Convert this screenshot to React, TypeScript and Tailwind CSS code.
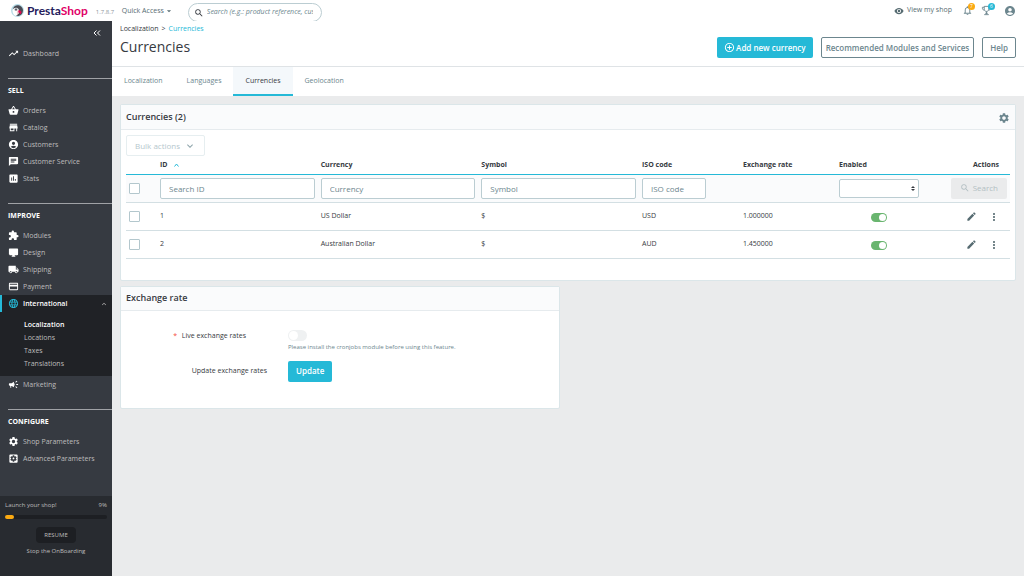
import type { ComponentType, ReactNode } from "react";
import {
  MdAccountCircle,
  MdAddCircleOutline,
  MdArrowDropDown,
  MdAssessment,
  MdCampaign,
  MdChat,
  MdCreditCard,
  MdDesktopMac,
  MdEdit,
  MdExpandLess,
  MdExpandMore,
  MdExtension,
  MdLanguage,
  MdLocalShipping,
  MdMoreVert,
  MdNotificationsNone,
  MdSearch,
  MdSettings,
  MdSettingsApplications,
  MdShoppingBasket,
  MdStore,
  MdTrendingUp,
  MdVisibility,
} from "react-icons/md";

type Icon = ComponentType<{ className?: string }>;
type Item = { label: string; icon: Icon };

const sell: Item[] = [
  { label: "Orders", icon: MdShoppingBasket },
  { label: "Catalog", icon: MdStore },
  { label: "Customers", icon: MdAccountCircle },
  { label: "Customer Service", icon: MdChat },
  { label: "Stats", icon: MdAssessment },
];

const improve: Item[] = [
  { label: "Modules", icon: MdExtension },
  { label: "Design", icon: MdDesktopMac },
  { label: "Shipping", icon: MdLocalShipping },
  { label: "Payment", icon: MdCreditCard },
];

const configure: Item[] = [
  { label: "Shop Parameters", icon: MdSettings },
  { label: "Advanced Parameters", icon: MdSettingsApplications },
];

const currencies = [
  { id: 1, name: "US Dollar", symbol: "$", iso: "USD", rate: "1.000000" },
  { id: 2, name: "Australian Dollar", symbol: "$", iso: "AUD", rate: "1.450000" },
];

function LogoMark() {
  return (
    <svg viewBox="0 0 26 26" className="size-[13px]" aria-hidden="true">
      <circle cx="13" cy="13" r="13" fill="#b7dbe6" />
      <path d="M4 10C5 4 11 1 17 3c5 2 7 6 7 10 0 6-4 10-9 11l-6-1c2-4 1-7-2-9z" fill="#4a4c55" />
      <path d="M3 13c1-4 5-6 9-5 3 1 4 3 4 6-1 5-3 9-7 10-4-2-6-6-6-11z" fill="#fff" />
      <circle cx="10" cy="11" r="3" fill="#a3a8b0" />
      <circle cx="10" cy="11" r="1.3" fill="#2b2b33" />
      <path d="M14 13c4-2 7 1 7 4l-2 4c-1-3-3-4-5-4z" fill="#df0a50" />
      <path d="M14 12c-3 2-3 6-1 9l3-2c-1-1-2-3-1-7z" fill="#f3c9cf" />
    </svg>
  );
}

function Trophy() {
  return (
    <svg viewBox="0 0 24 24" className="size-[11px]" fill="none" stroke="currentColor" strokeWidth="2" aria-hidden="true">
      <path d="M7 3h10v6c0 3-2 5-5 5s-5-2-5-5zM7 5H3v2c0 3 2 4 4 4M17 5h4v2c0 3-2 4-4 4M12 14v6M7 21h10M9 18h6" />
    </svg>
  );
}

function NavLink({ item }: { item: Item }) {
  const Glyph = item.icon;
  return (
    <li>
      <a href="#" className="flex h-[17px] items-center gap-1 pl-2 text-[#bebdbd]">
        <Glyph className="size-[11px] shrink-0 text-white" />
        {item.label}
      </a>
    </li>
  );
}

function NavGroup({ title, children }: { title: string; children: ReactNode }) {
  return (
    <section>
      <h2 className="ml-2 flex h-6 items-center border-t border-[#a0a2a6] text-[7px] font-bold text-white">{title}</h2>
      {children}
    </section>
  );
}

function Sidebar() {
  return (
    <aside className="flex w-28 shrink-0 flex-col bg-[#363a41] text-[7px] leading-[10px]">
      <div className="flex h-6 items-center justify-end pr-[11px]">
        <button aria-label="Collapse menu" className="text-white">
          <svg viewBox="0 0 16 12" className="h-[6px] w-2" fill="none" stroke="currentColor" strokeWidth="2" aria-hidden="true">
            <path d="M7 1 2 6l5 5M14 1 9 6l5 5" />
          </svg>
        </button>
      </div>
      <nav aria-label="Main menu">
        <ul className="mb-4">
          <NavLink item={{ label: "Dashboard", icon: MdTrendingUp }} />
        </ul>
        <NavGroup title="SELL">
          <ul className="mb-4">
            {sell.map((i) => (
              <NavLink key={i.label} item={i} />
            ))}
          </ul>
        </NavGroup>
        <NavGroup title="IMPROVE">
          <ul className="mb-4">
            {improve.map((i) => (
              <NavLink key={i.label} item={i} />
            ))}
            <li className="bg-[#202226]">
              <a href="#" className="flex h-[17px] items-center gap-1 border-l-2 border-[#25b9d7] pr-1 pl-[6px] font-semibold text-white">
                <MdLanguage className="size-[11px] shrink-0 text-[#25b9d7]" />
                <span className="grow">International</span>
                <MdExpandLess className="size-2 text-[#bebdbd]" />
              </a>
              <ul className="pt-[6px] pb-[6px] pl-6 text-[#bebdbd]">
                <li><a href="#" className="flex h-[13px] items-center font-semibold text-white">Localization</a></li>
                <li><a href="#" className="flex h-[13px] items-center">Locations</a></li>
                <li><a href="#" className="flex h-[13px] items-center">Taxes</a></li>
                <li><a href="#" className="flex h-[13px] items-center">Translations</a></li>
              </ul>
            </li>
            <NavLink item={{ label: "Marketing", icon: MdCampaign }} />
          </ul>
        </NavGroup>
        <NavGroup title="CONFIGURE">
          <ul>
            {configure.map((i) => (
              <NavLink key={i.label} item={i} />
            ))}
          </ul>
        </NavGroup>
      </nav>
      <div className="mt-auto flex h-20 flex-col items-center bg-[#282b30] px-[5px] pt-1 text-[6px] text-[#bebdbd]">
        <div className="flex w-full justify-between">
          <span>Launch your shop!</span>
          <span>9%</span>
        </div>
        <div className="mt-[5px] h-1 w-full rounded-full bg-[#1d1f23]">
          <div className="h-1 w-[9%] rounded-full bg-[#fbaa12]" />
        </div>
        <button className="mt-2 h-4 rounded-sm bg-[#1d1f23] px-2">RESUME</button>
        <a href="#" className="mt-[3px]">Stop the OnBoarding</a>
      </div>
    </aside>
  );
}

function TopBar() {
  return (
    <header className="flex h-[21px] items-center bg-white text-[#6c868e]">
      <a href="#" className="flex items-center gap-[3px] pl-[11px] font-['Lato',sans-serif] text-[12px] leading-4 font-bold text-[#251b5b]">
        <LogoMark />
        <span>Presta<span className="text-[#df0067]">Shop</span></span>
      </a>
      <span className="w-7 shrink-0 pt-1 pl-2 text-[6px] text-[#8d959c]">1.7.8.7</span>
      <button className="flex shrink-0 items-center pt-px pl-[6px] text-[#576c72]">
        Quick Access
        <MdArrowDropDown className="size-[10px]" />
      </button>
      <label className="mt-[3px] ml-[14px] flex h-[19px] w-[134px] shrink-0 items-center gap-[3px] self-start rounded-full border border-[#bbcdd2] pr-2 pl-[5px]">
        <MdSearch className="size-[10px] shrink-0 text-[#363a41]" />
        <input
          type="text"
          aria-label="Search"
          placeholder="Search (e.g.: product reference, customer name…)"
          className="min-w-0 grow bg-transparent text-[7px] outline-none placeholder:text-[#6c868e] placeholder:italic"
        />
      </label>
      <div className="ml-auto flex items-center pr-2">
        <a href="#" className="flex items-center gap-[3px] pr-[10px] text-[#576c72]">
          <MdVisibility className="size-[10px]" />
          View my shop
        </a>
        <button aria-label="Notifications" className="relative mr-2">
          <MdNotificationsNone className="size-[11px]" />
          <span className="absolute -top-[2px] -right-[2px] flex size-[7px] items-center justify-center rounded-full bg-[#fbaa12] text-[5px] text-white">7</span>
        </button>
        <button aria-label="Achievements" className="relative mr-3">
          <Trophy />
          <span className="absolute -top-[2px] -right-[3px] flex size-[7px] items-center justify-center rounded-full bg-[#25b9d7] text-[5px] text-white">6</span>
        </button>
        <button aria-label="Account">
          <MdAccountCircle className="size-3" />
        </button>
      </div>
    </header>
  );
}

const outline = "h-[21px] rounded-xs border border-[#6c868e] bg-white text-[8px] font-semibold text-[#6c868e]";
const field = "block h-[21px] rounded-xs border border-[#bbcdd2] bg-white px-2 text-[8px] text-[#363a41] placeholder:text-[#6c868e]";
const tick = "block size-[11px] appearance-none rounded-[1px] border border-[#b3c7cd] bg-white";

function PageHead() {
  const tabs = ["Localization", "Languages", "Currencies", "Geolocation"];
  return (
    <div className="bg-white">
      <div className="flex h-[46px] items-end justify-between border-b border-[#dfe3e6] pr-2 pb-2 pl-2">
        <div className="self-start pt-[3px]">
          <nav aria-label="Breadcrumb" className="flex gap-[3px] text-[7px] leading-[10px]">
            <a href="#">Localization</a>
            <span>&gt;</span>
            <a href="#" className="text-[#25b9d7]">Currencies</a>
          </nav>
          <h1 className="mt-[3px] text-[14px] leading-5">Currencies</h1>
        </div>
        <div className="flex gap-2">
          <button className="flex h-[21px] items-center gap-px rounded-xs bg-[#25b9d7] px-[7px] text-[8px] font-semibold text-white">
            <MdAddCircleOutline className="size-[11px]" />
            Add new currency
          </button>
          <button className={`${outline} px-1`}>Recommended Modules and Services</button>
          <button className={`${outline} px-[7px]`}>Help</button>
        </div>
      </div>
      <nav aria-label="Sections" className="flex h-[29px] text-[7px]">
        {tabs.map((t) => (
          <a
            key={t}
            href="#"
            className={
              t === "Currencies"
                ? "flex items-center border-b-2 border-[#25b9d7] bg-[#f4f8fb] px-3 pt-[2px]"
                : "flex items-center px-3"
            }
          >
            <span className={t === "Currencies" ? "" : "text-[#6c868e]"}>{t}</span>
          </a>
        ))}
      </nav>
    </div>
  );
}

function CurrencyCard() {
  return (
    <section className="rounded-xs border border-[#dbe6e9] bg-white">
      <div className="flex h-[25px] items-center justify-between border-b border-[#e6ebee] bg-[#fafbfc] px-[5px]">
        <h2 className="text-[9px] font-semibold">Currencies (2)</h2>
        <button aria-label="Table settings" className="pt-[2px] text-[#6c868e]">
          <MdSettings className="size-3" />
        </button>
      </div>
      <div className="px-[5px] pt-[5px] pb-[21px]">
        <button disabled className="flex h-[21px] items-center gap-1 rounded-xs border border-[#e6eef0] px-2 text-[8px] text-[#b5c7cd]">
          Bulk actions
          <MdExpandMore className="size-3 text-[#8fa5ac]" />
        </button>
        <table className="w-full table-fixed border-collapse text-left text-[7px]">
          <colgroup>
            <col className="w-[31px]" />
            <col />
            <col />
            <col />
            <col className="w-[101px]" />
            <col className="w-[96px]" />
            <col className="w-[86px]" />
            <col className="w-[88px]" />
          </colgroup>
          <thead>
            <tr className="h-[18px] border-b border-[#25b9d7] [&>th]:px-[3px] [&>th]:font-bold">
              <td />
              <th scope="col" aria-sort="ascending">
                <span className="flex items-center gap-[6px]">
                  ID
                  <svg viewBox="0 0 5 4" className="h-1 w-[5px]" fill="none" stroke="#25b9d7" aria-hidden="true">
                    <path d="M.5 3.5 2.5 1l2 2.5" />
                  </svg>
                </span>
              </th>
              <th scope="col">Currency</th>
              <th scope="col">Symbol</th>
              <th scope="col">ISO code</th>
              <th scope="col">Exchange rate</th>
              <th scope="col">Enabled</th>
              <th scope="col"><span className="block pr-2 text-right">Actions</span></th>
            </tr>
            <tr className="h-7 border-b border-[#d3dfe3] bg-[#fafbfc] [&>td]:px-[3px]">
              <td><input type="checkbox" aria-label="Select all" className={tick} /></td>
              <td><input aria-label="Search ID" placeholder="Search ID" className={`${field} w-full`} /></td>
              <td><input aria-label="Currency" placeholder="Currency" className={`${field} w-full`} /></td>
              <td><input aria-label="Symbol" placeholder="Symbol" className={`${field} w-full`} /></td>
              <td><input aria-label="ISO code" placeholder="ISO code" className={`${field} w-16`} /></td>
              <td />
              <td>
                <span className="relative block">
                  <select aria-label="Enabled" className="block h-[19px] w-full appearance-none rounded-xs border border-[#bbcdd2] bg-white px-2 text-[8px]">
                    <option value="" />
                    <option>Yes</option>
                    <option>No</option>
                  </select>
                  <svg viewBox="0 0 4 5" className="pointer-events-none absolute top-[7px] right-1 h-[5px] w-1" fill="#363a41" aria-hidden="true">
                    <path d="M2 0 0 2h4zM2 5 0 3h4z" />
                  </svg>
                </span>
              </td>
              <td>
                <button disabled className="ml-auto flex h-[21px] items-center gap-[3px] rounded-xs bg-[#eaebec] px-[9px] text-[8px] text-[#b3bfc3]">
                  <MdSearch className="size-[10px]" />
                  Search
                </button>
              </td>
            </tr>
          </thead>
          <tbody>
            {currencies.map((c) => (
              <tr key={c.id} className="h-7 border-b border-[#d3dfe3] [&>td]:px-[3px]">
                <td><input type="checkbox" aria-label={`Select ${c.name}`} className={tick} /></td>
                <td>{c.id}</td>
                <td>{c.name}</td>
                <td>{c.symbol}</td>
                <td>{c.iso}</td>
                <td>{c.rate}</td>
                <td>
                  <input
                    type="checkbox"
                    role="switch"
                    defaultChecked
                    aria-label={`${c.name} enabled`}
                    className="mx-auto mt-[3px] flex h-[9px] w-4 appearance-none items-center justify-end rounded-full bg-[#69b56f] p-px before:size-[7px] before:rounded-full before:bg-white"
                  />
                </td>
                <td>
                  <span className="flex items-center justify-end gap-[11px] pr-[7px] text-[#576c72]">
                    <button aria-label={`Edit ${c.name}`}><MdEdit className="size-[11px]" /></button>
                    <button aria-label={`More actions for ${c.name}`} className="pt-[2px]"><MdMoreVert className="size-3" /></button>
                  </span>
                </td>
              </tr>
            ))}
          </tbody>
        </table>
      </div>
    </section>
  );
}

function RateCard() {
  return (
    <section className="rounded-xs border border-[#dbe6e9] bg-white">
      <h2 className="flex h-6 items-center border-b border-[#e6ebee] bg-[#fafbfc] px-[5px] text-[9px] font-semibold">Exchange rate</h2>
      <div className="grid grid-cols-[1fr_2fr] gap-y-[9px] pt-[19px] pb-[26px] text-[7px]">
        <label htmlFor="live" className="pr-[21px] text-right leading-[11px]">
          <span className="mr-[3px] text-[#f54c3e]">*</span> Live exchange rates
        </label>
        <div className="pl-[21px]">
          <input
            id="live"
            type="checkbox"
            role="switch"
            disabled
            className="flex h-[11px] w-[19px] appearance-none items-center rounded-full bg-[#eff1f2] p-px before:size-[9px] before:rounded-full before:bg-white"
          />
          <p className="mt-px text-[6px] leading-[10px] text-[#6c868e]">Please install the cronjobs module before using this feature.</p>
        </div>
        <label htmlFor="update" className="pt-1 text-right leading-[11px]">Update exchange rates</label>
        <div className="pl-[21px]">
          <button id="update" className="h-[21px] rounded-xs bg-[#25b9d7] px-2 text-[8px] font-semibold text-white">Update</button>
        </div>
      </div>
    </section>
  );
}

export default function App() {
  return (
    <div className="flex min-h-screen flex-col bg-[#eaebec] font-['Open_Sans',sans-serif] text-[7px] text-[#363a41]">
      <TopBar />
      <div className="flex grow">
        <Sidebar />
        <main className="min-w-0 grow">
          <PageHead />
          <div className="flex flex-col gap-[5px] px-2 pt-2">
            <CurrencyCard />
            <div className="grid grid-cols-2 gap-4">
              <RateCard />
            </div>
          </div>
        </main>
      </div>
    </div>
  );
}
